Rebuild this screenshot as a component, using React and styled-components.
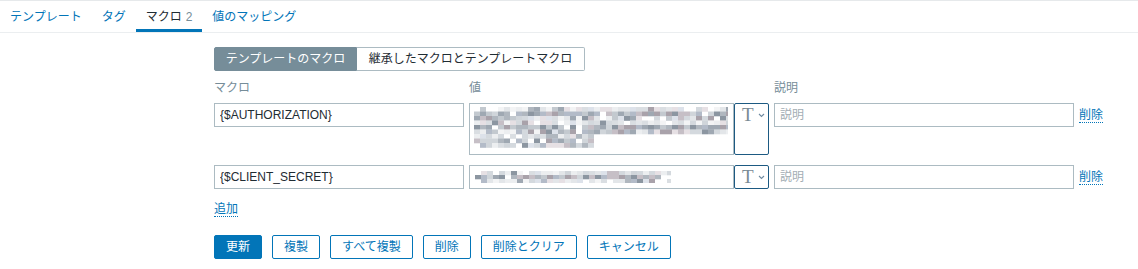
import React from 'react';
import styled, { createGlobalStyle } from 'styled-components';

const GlobalStyle = createGlobalStyle`
  html, body { margin: 0; padding: 0; background: #fff; }
  body {
    font-family: "Liberation Sans", Arial, "Noto Sans CJK JP", sans-serif;
    font-size: 12px;
    color: #1f2c33;
  }
  * { box-sizing: border-box; }
`;

const Page = styled.div`
  width: 1138px;
  height: 269px;
  border-top: 1px solid #e6e9eb;
  overflow: hidden;
`;

const Tabs = styled.nav`
  display: flex;
  height: 32px;
  border-bottom: 1px solid #ebeef0;
`;

const Tab = styled.div`
  display: flex;
  align-items: center;
  gap: 4px;
  padding: 0 10px;
  line-height: 14px;
  color: ${p => (p.$active ? '#1f2c33' : '#0275b8')};
  box-shadow: ${p => (p.$active ? 'inset 0 -3px 0 #0275b8' : 'none')};
`;

const Count = styled.span`
  color: #768d99;
`;

const Content = styled.div`
  padding: 14px 0 0 214px;
`;

const Segmented = styled.div`
  display: flex;
`;

const Segment = styled.div`
  width: ${p => p.$w}px;
  height: 24px;
  display: flex;
  align-items: center;
  justify-content: center;
  line-height: 14px;
  border: 1px solid ${p => (p.$active ? '#768d99' : '#acbbc2')};
  border-left-width: ${p => (p.$active ? 1 : 0)}px;
  background: ${p => (p.$active ? '#768d99' : '#fff')};
  color: ${p => (p.$active ? '#fff' : '#1f2c33')};
  border-radius: ${p => (p.$active ? '2px 0 0 2px' : '0 2px 2px 0')};
`;

const Header = styled.div`
  display: flex;
  gap: 5px;
  margin-top: 10px;
  line-height: 14px;
`;

const HeadLabel = styled.div`
  width: ${p => p.$w}px;
  color: #768d99;
`;

const Row = styled.div`
  display: flex;
  gap: 5px;
  align-items: flex-start;
  margin-top: ${p => p.$mt}px;
`;

const Field = styled.input`
  width: ${p => p.$w}px;
  height: 24px;
  padding: 0 5px;
  border: 1px solid #acbbc2;
  border-radius: 0;
  background: #fff;
  font: inherit;
  font-size: 12px;
  color: #1f2c33;
  outline: none;
  &::placeholder { color: #a3adb4; }
`;

const ValueGroup = styled.div`
  display: flex;
  width: 300px;
`;

const ValueBox = styled.div`
  width: 265px;
  height: ${p => p.$h}px;
  border: 1px solid #acbbc2;
  display: flex;
  align-items: ${p => (p.$multi ? 'flex-start' : 'center')};
  padding: ${p => (p.$multi ? '3px 0 0 4px' : '0 0 0 5px')};
`;

const TypeButton = styled.div`
  width: 35px;
  height: ${p => p.$h}px;
  border: 1px solid #1d5a82;
  border-radius: 2px;
  background: #fff;
`;

const TypeFace = styled.div`
  height: 22px;
  display: flex;
  align-items: center;
  padding-left: 7px;
  gap: 4px;
`;

const TGlyph = styled.span`
  font-family: "Liberation Serif", "Times New Roman", serif;
  font-size: 19px;
  line-height: 18px;
  color: #7a8a94;
`;

const RemoveCell = styled.div`
  height: 24px;
  display: flex;
  align-items: center;
`;

const DottedLink = styled.span`
  color: #0275b8;
  line-height: 14px;
  border-bottom: 1px dotted #0275b8;
`;

const AddRow = styled.div`
  margin-top: 13px;
  line-height: 14px;
`;

const ButtonRow = styled.div`
  display: flex;
  gap: 10px;
  margin-top: 19px;
`;

const Button = styled.button`
  height: 24px;
  padding: 0 11px;
  border: 1px solid #0275b8;
  border-radius: 2px;
  background: ${p => (p.$primary ? '#0275b8' : '#fff')};
  color: ${p => (p.$primary ? '#fff' : '#0275b8')};
  font: inherit;
  font-size: 12px;
  line-height: 14px;
  cursor: pointer;
`;

function rng(seed) {
  let s = seed;
  return () => {
    s = (s * 16807) % 2147483647;
    return (s - 1) / 2147483646;
  };
}

const LIGHT = ['#eceef0', '#e3e6e9', '#dadee2', '#d4d9de', '#e6e0e4', '#dde2ea', '#f3f4f5'];
const DARK = ['#c3c9cf', '#b0b7bf', '#9fa8b2', '#8c96a1', '#c6bfc6', '#b3bbc8', '#d0d5da', '#a9a2aa'];

function Mosaic({ lines, seed, cell = 6, lineH = 13.5 }) {
  const r = rng(seed);
  const rects = [];
  const maxW = Math.max(...lines);
  lines.forEach((w, li) => {
    const rowH = lineH / 3;
    for (let row = 0; row < 3; row++) {
      for (let x = 0; x < w; x += cell) {
        const v = r();
        if (v < 0.1) continue;
        const pal = row === 1 || (row === 2 && r() > 0.55) || (row === 0 && r() > 0.8) ? DARK : LIGHT;
        const c = pal[Math.floor(r() * pal.length)];
        rects.push(
          <rect
            key={`${li}-${row}-${x}`}
            x={x}
            y={li * lineH + row * rowH}
            width={Math.min(cell, w - x)}
            height={rowH + 0.3}
            fill={c}
          />
        );
      }
    }
  });
  return (
    <svg width={maxW} height={lines.length * lineH} style={{ display: 'block' }}>
      {rects}
    </svg>
  );
}

function Chevron() {
  return (
    <svg width="7" height="5" viewBox="0 0 7 5" style={{ display: 'block', marginTop: 1 }}>
      <path d="M1 1 L3.5 3.5 L6 1" fill="none" stroke="#6f8aa0" strokeWidth="1.1" />
    </svg>
  );
}

function TypeSelect({ h }) {
  return (
    <TypeButton $h={h}>
      <TypeFace>
        <TGlyph>T</TGlyph>
        <Chevron />
      </TypeFace>
    </TypeButton>
  );
}

export default function App() {
  return (
    <>
      <GlobalStyle />
      <Page>
        <Tabs>
          <Tab>テンプレート</Tab>
          <Tab>タグ</Tab>
          <Tab $active>
            マクロ<Count>2</Count>
          </Tab>
          <Tab>値のマッピング</Tab>
        </Tabs>
        <Content>
          <Segmented>
            <Segment $active $w={143}>テンプレートのマクロ</Segment>
            <Segment $w={228}>継承したマクロとテンプレートマクロ</Segment>
          </Segmented>

          <Header>
            <HeadLabel $w={250}>マクロ</HeadLabel>
            <HeadLabel $w={300}>値</HeadLabel>
            <HeadLabel $w={300}>説明</HeadLabel>
          </Header>

          <Row $mt={8}>
            <Field $w={250} defaultValue="{$AUTHORIZATION}" readOnly />
            <ValueGroup>
              <ValueBox $h={52} $multi>
                <Mosaic lines={[254, 254, 120]} seed={12345} />
              </ValueBox>
              <TypeSelect h={52} />
            </ValueGroup>
            <Field $w={300} placeholder="説明" readOnly />
            <RemoveCell>
              <DottedLink>削除</DottedLink>
            </RemoveCell>
          </Row>

          <Row $mt={10}>
            <Field $w={250} defaultValue="{$CLIENT_SECRET}" readOnly />
            <ValueGroup>
              <ValueBox $h={24}>
                <Mosaic lines={[196]} seed={987} lineH={12} />
              </ValueBox>
              <TypeSelect h={24} />
            </ValueGroup>
            <Field $w={300} placeholder="説明" readOnly />
            <RemoveCell>
              <DottedLink>削除</DottedLink>
            </RemoveCell>
          </Row>

          <AddRow>
            <DottedLink>追加</DottedLink>
          </AddRow>

          <ButtonRow>
            <Button $primary>更新</Button>
            <Button>複製</Button>
            <Button>すべて複製</Button>
            <Button>削除</Button>
            <Button>削除とクリア</Button>
            <Button>キャンセル</Button>
          </ButtonRow>
        </Content>
      </Page>
    </>
  );
}
